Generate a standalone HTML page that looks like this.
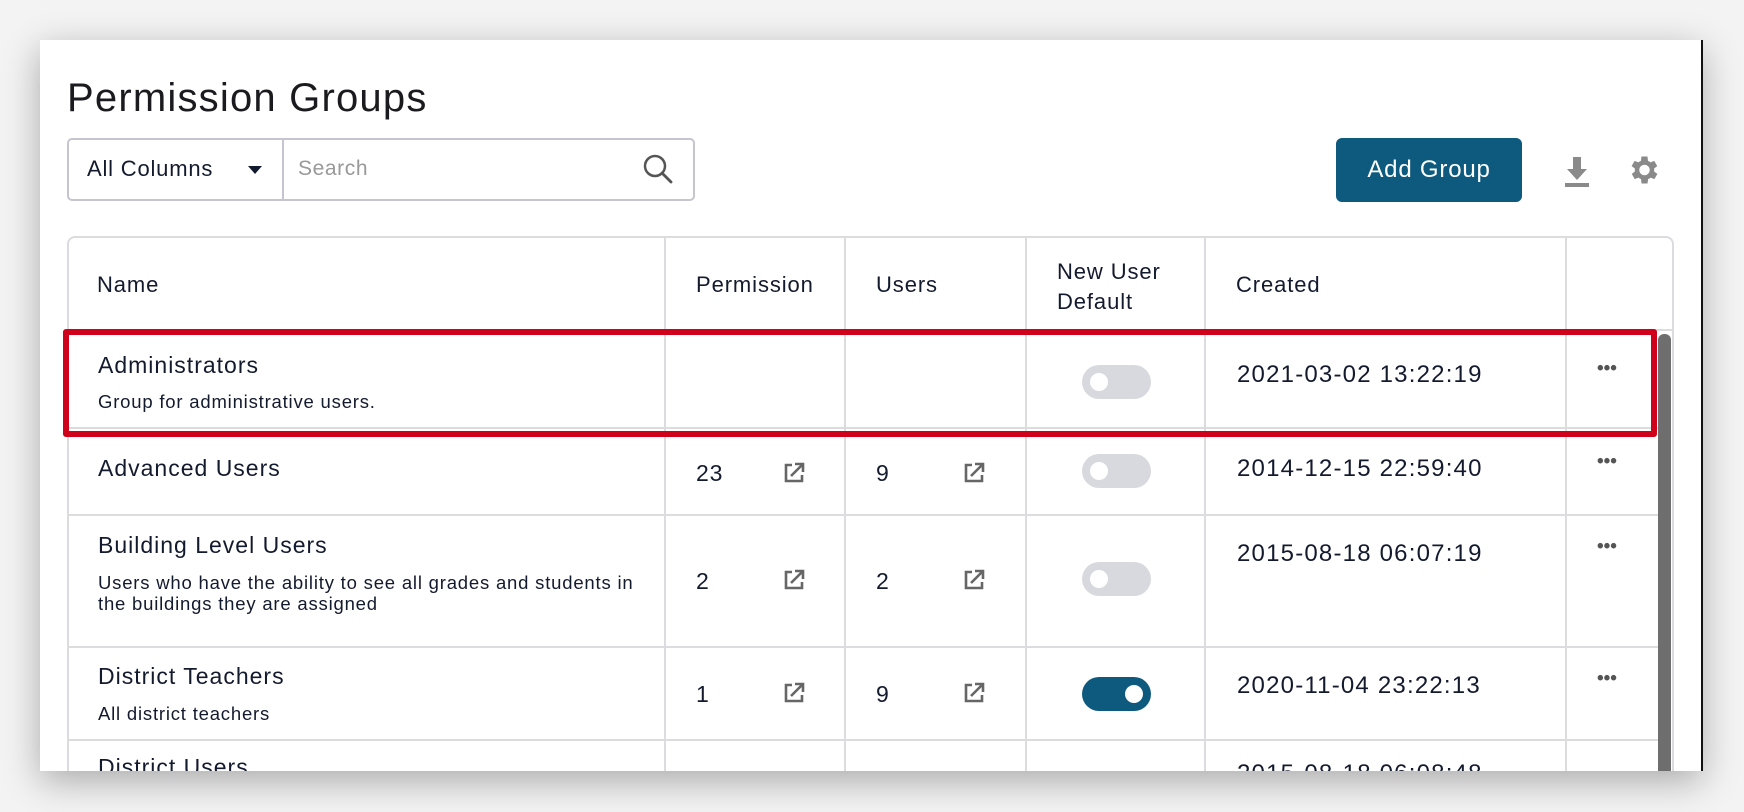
<!DOCTYPE html>
<html><head><meta charset="utf-8"><style>
*{margin:0;padding:0;box-sizing:border-box}
body{width:1744px;height:812px;background:#f3f3f3;font-family:"Liberation Sans",sans-serif;color:#141a2e;position:relative;overflow:hidden}
.card{position:absolute;left:40px;top:40px;width:1662px;height:731px;background:#fff;box-shadow:0 10px 34px rgba(0,0,0,.3);overflow:hidden}
.a{position:absolute;white-space:nowrap}
.vl{position:absolute;width:2px;background:#dcdcdf}
.hl{position:absolute;height:2px;background:#dcdcdf}
.tg{position:absolute;width:69px;height:34px;border-radius:17px;background:#d8d9de}
.tg::after{content:"";position:absolute;left:8px;top:8px;width:18px;height:18px;border-radius:50%;background:#fff}
.tg.on{background:#0e5a7e}
.tg.on::after{left:43px}
.dots{position:absolute;font-size:19px;color:#555;letter-spacing:0px;font-weight:bold}
.nm{font-size:23px;letter-spacing:1px}
.hd{font-size:22px;letter-spacing:0.9px}
.ds{font-size:18.5px;letter-spacing:0.8px}
.num{font-size:23px;letter-spacing:0.8px}
.dt{font-size:24px;letter-spacing:1.2px}
</style></head><body>
<div class="card">
<div class="a" style="left:27px;top:36px;font-size:40px;letter-spacing:1.2px;color:#1b1b1f">Permission Groups</div>
<div class="a" style="left:27px;top:98px;width:628px;height:63px;border:2px solid #c5c5d0;border-radius:5px"></div>
<div class="a" style="left:242px;top:98px;width:2px;height:63px;background:#c5c5d0"></div>
<div class="a" style="left:47px;top:116px;font-size:22px;letter-spacing:0.8px">All Columns</div>
<svg class="a" style="left:207px;top:125px" width="16" height="10"><path d="M1 1h14L8 9z" fill="#141a2e"/></svg>
<div class="a" style="left:258px;top:117px;font-size:21px;letter-spacing:0.6px;color:#999">Search</div>
<svg class="a" style="left:602px;top:113px" width="32" height="32"><circle cx="13" cy="13" r="10" fill="none" stroke="#555" stroke-width="2.5"/><path d="M20 20l9 9" stroke="#555" stroke-width="2.8" stroke-linecap="round"/></svg>
<div class="a" style="left:1296px;top:98px;width:186px;height:64px;background:#0e5a7e;border-radius:6px;color:#fff;font-size:24px;letter-spacing:0.8px;text-align:center;line-height:64px">Add Group</div>
<svg class="a" style="left:1523px;top:115px" width="28" height="34"><path d="M10 2h8v12h6l-10 11L4 14h6z" fill="#8a8a8a"/><rect x="2" y="28" width="24" height="4" fill="#8a8a8a"/></svg>
<svg class="a" style="left:1585px;top:112px" width="36" height="36" viewBox="0 0 24 24"><path fill="#8a8a8a" d="M19.4 13a7.5 7.5 0 0 0 0-2l2.1-1.6-2-3.5-2.5 1a7.3 7.3 0 0 0-1.7-1L15 3h-4l-.4 2.9a7.3 7.3 0 0 0-1.7 1l-2.5-1-2 3.5L6.6 11a7.5 7.5 0 0 0 0 2l-2.1 1.6 2 3.5 2.5-1a7.3 7.3 0 0 0 1.7 1L11 21h4l.4-2.9a7.3 7.3 0 0 0 1.700-1l2.5 1 2-3.5zM13 15.5a3.5 3.5 0 1 1 0-7 3.5 3.5 0 0 1 0 7z"/></svg>

<div class="a" style="left:27px;top:196px;width:1607px;height:600px;border:2px solid #dcdcdf;border-radius:8px"></div>
<div class="vl" style="left:624px;top:196px;height:540px"></div>
<div class="vl" style="left:804px;top:196px;height:540px"></div>
<div class="vl" style="left:985px;top:196px;height:540px"></div>
<div class="vl" style="left:1164px;top:196px;height:540px"></div>
<div class="vl" style="left:1525px;top:196px;height:540px"></div>
<div class="hl" style="left:27px;top:289px;width:1607px"></div>
<div class="hl" style="left:27px;top:387px;width:1595px"></div>
<div class="hl" style="left:27px;top:474px;width:1595px"></div>
<div class="hl" style="left:27px;top:606px;width:1595px"></div>
<div class="hl" style="left:27px;top:699px;width:1595px"></div>

<div class="a hd" style="left:57px;top:232px">Name</div>
<div class="a hd" style="left:656px;top:232px">Permission</div>
<div class="a hd" style="left:836px;top:232px">Users</div>
<div class="a hd" style="left:1017px;top:217px;line-height:30px">New User<br>Default</div>
<div class="a hd" style="left:1196px;top:232px">Created</div>

<div class="a nm" style="left:58px;top:312px">Administrators</div>
<div class="a ds" style="left:58px;top:351px">Group for administrative users.</div>
<div class="tg" style="left:1042px;top:325px"></div>
<div class="a dt" style="left:1197px;top:321px">2021-03-02 13:22:19</div>
<div class="dots" style="left:1557px;top:318px">•••</div>

<div class="a nm" style="left:58px;top:415px">Advanced Users</div>
<div class="a num" style="left:656px;top:420px">23</div>
<div class="a num" style="left:836px;top:420px">9</div>
<div class="tg" style="left:1042px;top:414px"></div>
<div class="a dt" style="left:1197px;top:415px">2014-12-15 22:59:40</div>
<div class="dots" style="left:1557px;top:411px">•••</div>

<div class="a nm" style="left:58px;top:492px">Building Level Users</div>
<div class="a ds" style="left:58px;top:532px;line-height:21px">Users who have the ability to see all grades and students in<br>the buildings they are assigned</div>
<div class="a num" style="left:656px;top:528px">2</div>
<div class="a num" style="left:836px;top:528px">2</div>
<div class="tg" style="left:1042px;top:522px"></div>
<div class="a dt" style="left:1197px;top:500px">2015-08-18 06:07:19</div>
<div class="dots" style="left:1557px;top:496px">•••</div>

<div class="a nm" style="left:58px;top:623px">District Teachers</div>
<div class="a ds" style="left:58px;top:663px">All district teachers</div>
<div class="a num" style="left:656px;top:641px">1</div>
<div class="a num" style="left:836px;top:641px">9</div>
<div class="tg on" style="left:1042px;top:637px"></div>
<div class="a dt" style="left:1197px;top:632px">2020-11-04 23:22:13</div>
<div class="dots" style="left:1557px;top:628px">•••</div>

<div class="a nm" style="left:58px;top:714px">District Users</div>
<div class="a dt" style="left:1197px;top:720px">2015-08-18 06:08:48</div>

<svg class="a" style="left:742px;top:421px" width="24" height="24" viewBox="0 0 24 24"><path d="M10 4H4v16h16v-6" fill="none" stroke="#666" stroke-width="2.6"/><path d="M9 15L20 4M13 3h8v8" fill="none" stroke="#666" stroke-width="2.6"/></svg>
<svg class="a" style="left:922px;top:421px" width="24" height="24" viewBox="0 0 24 24"><path d="M10 4H4v16h16v-6" fill="none" stroke="#666" stroke-width="2.6"/><path d="M9 15L20 4M13 3h8v8" fill="none" stroke="#666" stroke-width="2.6"/></svg>
<svg class="a" style="left:742px;top:528px" width="24" height="24" viewBox="0 0 24 24"><path d="M10 4H4v16h16v-6" fill="none" stroke="#666" stroke-width="2.6"/><path d="M9 15L20 4M13 3h8v8" fill="none" stroke="#666" stroke-width="2.6"/></svg>
<svg class="a" style="left:922px;top:528px" width="24" height="24" viewBox="0 0 24 24"><path d="M10 4H4v16h16v-6" fill="none" stroke="#666" stroke-width="2.6"/><path d="M9 15L20 4M13 3h8v8" fill="none" stroke="#666" stroke-width="2.6"/></svg>
<svg class="a" style="left:742px;top:641px" width="24" height="24" viewBox="0 0 24 24"><path d="M10 4H4v16h16v-6" fill="none" stroke="#666" stroke-width="2.6"/><path d="M9 15L20 4M13 3h8v8" fill="none" stroke="#666" stroke-width="2.6"/></svg>
<svg class="a" style="left:922px;top:641px" width="24" height="24" viewBox="0 0 24 24"><path d="M10 4H4v16h16v-6" fill="none" stroke="#666" stroke-width="2.6"/><path d="M9 15L20 4M13 3h8v8" fill="none" stroke="#666" stroke-width="2.6"/></svg>

<div class="a" style="left:1618px;top:294px;width:13px;height:440px;background:#6e6e6e;border-radius:6px 6px 0 0"></div>
<div class="a" style="left:23px;top:289px;width:1594px;height:108px;border:6px solid #d0021b;border-radius:3px"></div>
</div>
<div class="a" style="left:1701px;top:40px;width:2px;height:731px;background:#111"></div>
</body></html>
